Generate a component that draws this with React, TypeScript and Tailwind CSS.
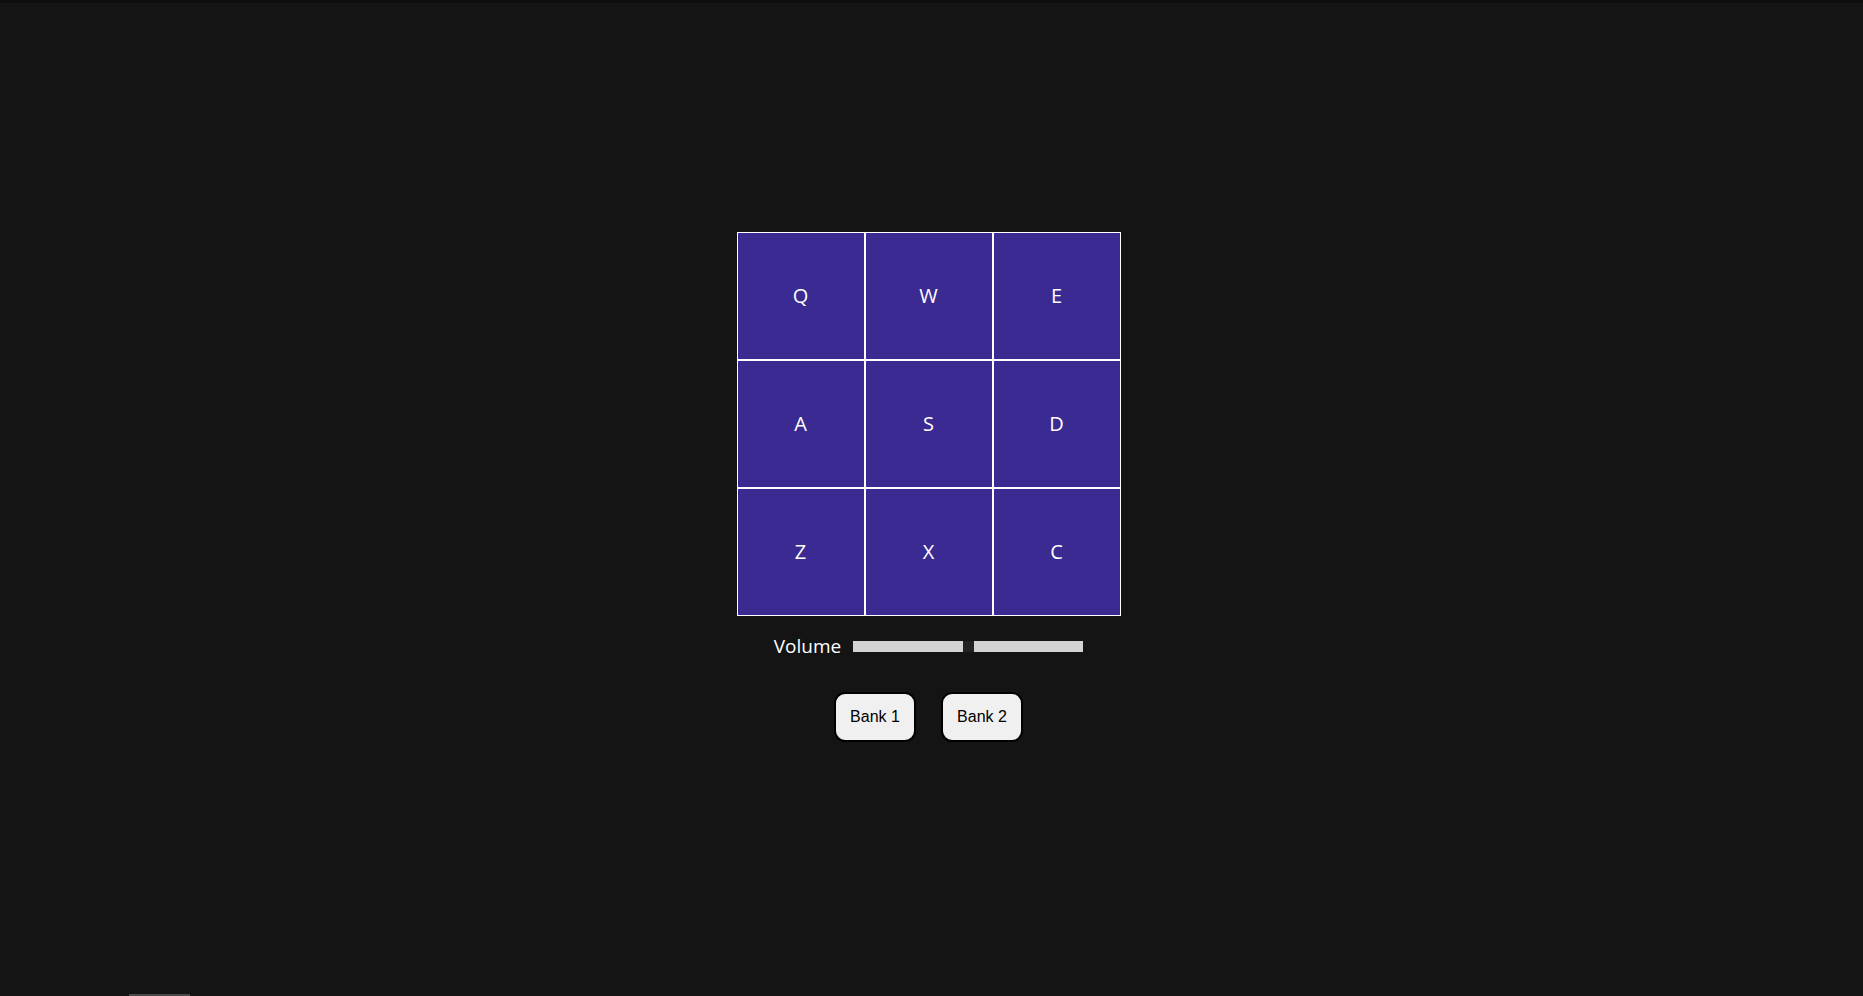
import React from 'react';

const pads = ['Q', 'W', 'E', 'A', 'S', 'D', 'Z', 'X', 'C'];

export default function App() {
    return (
        <div className="min-h-[996px] bg-[#141414] flex flex-col items-center pt-[232px] pr-[6px] border-t-[3px] border-[#0e0e0e] relative" style={{ fontFamily: '"Open Sans", "Noto Sans", sans-serif' }}>
            {/* pad grid */}
            <div className="grid grid-cols-[repeat(3,128px)] -mt-[3px]">
                {pads.map((k) => (
                    <button key={k} className="w-[128px] h-[128px] border border-white bg-[#3b2a91] text-white text-[20px] flex items-center justify-center" style={{ fontFamily: '"Open Sans", sans-serif' }}>
                        {k}
                    </button>
                ))}
            </div>

            <div className="flex items-center gap-[12px] mt-[17px]">
                <span className="text-white text-[19px] leading-[26px]">Volume</span>
                <input
                    type="range"
                    min={0}
                    max={1}
                    step={0.01}
                    defaultValue={0.5}
                    className="w-[230px] h-[11px] appearance-none bg-[#d3d3d3] outline-none [&::-webkit-slider-thumb]:appearance-none [&::-webkit-slider-thumb]:w-[11px] [&::-webkit-slider-thumb]:h-[11px] [&::-webkit-slider-thumb]:bg-[#222222] [&::-moz-range-thumb]:w-[11px] [&::-moz-range-thumb]:h-[11px] [&::-moz-range-thumb]:bg-[#222222] [&::-moz-range-thumb]:border-0 [&::-moz-range-thumb]:rounded-none"
                />
            </div>

            <div className="flex gap-[25px] mt-[33px]">
                {['Bank 1', 'Bank 2'].map((b) => (
                    <button key={b} className="w-[82px] h-[50px] rounded-[11px] border-2 border-black bg-[#f0f0f0] text-black text-[16px]" style={{ fontFamily: '"Liberation Sans", Arial, sans-serif' }}>
                        {b}
                    </button>
                ))}
            </div>

            {/* scrollbar remnant at the bottom */}
            <div className="absolute bottom-0 left-[129px] w-[61px] h-[2px] bg-[#4a4a4a]" />
        </div>
    );
}
